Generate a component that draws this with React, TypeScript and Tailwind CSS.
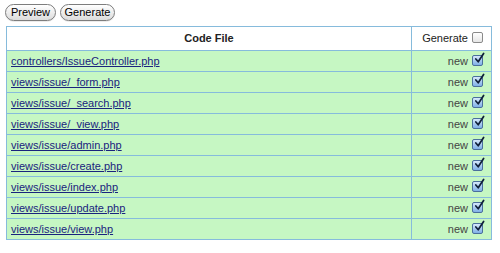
import React from 'react';

const files = [
  'controllers/IssueController.php',
  'views/issue/_form.php',
  'views/issue/_search.php',
  'views/issue/_view.php',
  'views/issue/admin.php',
  'views/issue/create.php',
  'views/issue/index.php',
  'views/issue/update.php',
  'views/issue/view.php',
];

function MacCheck({ checked }: { checked: boolean }) {
  if (!checked) {
    return (
      <span className="ml-[4px] inline-block w-[11px] h-[11px] rounded-[2px] border border-[#8a8a8a] bg-gradient-to-b from-white to-[#e6e6e6] align-[-1px]" />
    );
  }
  return (
    <span className="relative ml-[4px] inline-block w-[11px] h-[11px] rounded-[2px] border border-[#4a6f9c] bg-gradient-to-b from-[#d6e8fb] to-[#7fb0e6] align-[-1px]">
      <svg viewBox="0 0 12 12" className="absolute left-[1px] -top-[3px] w-[11px] h-[11px] overflow-visible">
        <path d="M2 6.5 L4.6 9.6 L10.5 0.5" fill="none" stroke="#10203a" strokeWidth="1.9" strokeLinecap="round" strokeLinejoin="round" />
      </svg>
    </span>
  );
}

function PillButton({ label, w }: { label: string; w: string }) {
  return (
    <button className={`${w} h-[17px] rounded-full border border-[#7d7d7d] bg-gradient-to-b from-white to-[#dcdcdc] text-[11px] leading-[15px] text-black shadow-[0_1px_0_rgba(0,0,0,0.08)]`}>
      {label}
    </button>
  );
}

export default function App() {
  return (
    <div className="w-[500px] h-[253px] bg-white pt-[4px] font-['Liberation_Sans',Arial,sans-serif] text-[11px]">
      <div className="flex gap-[4px] pl-[5px]">
        <PillButton label="Preview" w="w-[51px]" />
        <PillButton label="Generate" w="w-[55px]" />
      </div>

      <table className="ml-[6px] mt-[5px] w-[486px] border-collapse border border-[#86bbdc] bg-white">
        <thead>
          <tr className="h-[24px]">
            <th className="border border-[#86bbdc] text-center font-bold text-[11px] text-[#222]">Code File</th>
            <th className="w-[80px] border border-[#86bbdc] text-right pr-[8px] font-normal text-[11px] text-[#222]">
              Generate<MacCheck checked={false} />
            </th>
          </tr>
        </thead>
        <tbody>
          {files.map((f) => (
            <tr key={f} className="h-[21px] bg-[#c6f7c3]">
              <td className="border border-[#86bbdc] pl-[4px] leading-[14px]">
                <a href="#" className="text-[#1a237e] underline">{f}</a>
              </td>
              <td className="border border-[#86bbdc] text-right pr-[8px] text-[11px] text-[#444]">
                new<MacCheck checked />
              </td>
            </tr>
          ))}
        </tbody>
      </table>
    </div>
  );
}
